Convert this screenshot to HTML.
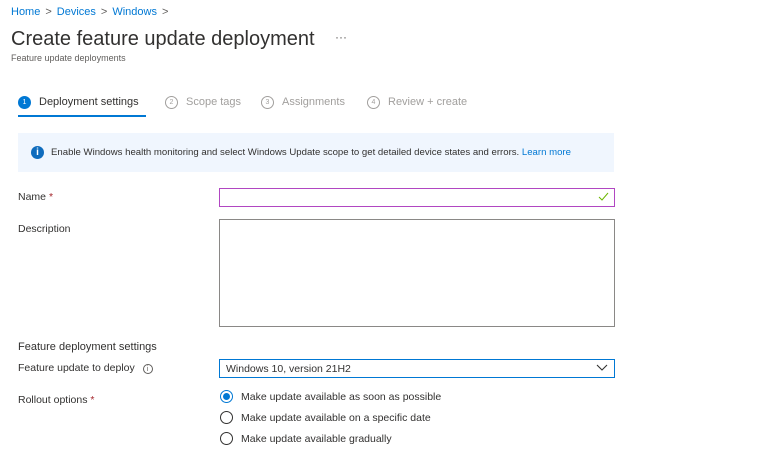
<!DOCTYPE html>
<html><head><style>
*{margin:0;padding:0;box-sizing:border-box}
body{width:768px;height:468px;background:#fff;font-family:"Liberation Sans",sans-serif;color:#323130;position:relative;overflow:hidden}
.a{position:absolute;white-space:nowrap}
.bc{font-size:11px;color:#0078d4;top:6px;left:11px}
.bc span{color:#605e5c;margin:0 5px}
.lbl{font-size:10.5px;color:#323130}
.rad{width:13px;height:13px;border:1px solid #323130;border-radius:50%;position:absolute}
.step{font-size:11px;color:#a19f9d;line-height:13px}
.num{display:inline-block;width:13px;height:13px;border:1px solid #a19f9d;border-radius:50%;font-size:7px;text-align:center;line-height:11px;vertical-align:top;margin-right:8px}
</style></head><body>
<div class="a bc">Home<span>&gt;</span>Devices<span>&gt;</span>Windows<span>&gt;</span></div>
<div class="a" style="top:28px;left:11px;font-size:20px;color:#323130">Create feature update deployment</div>
<div class="a" style="top:30px;left:335px;font-size:12px;color:#605e5c">···</div>
<div class="a" style="top:53px;left:11px;font-size:9px;color:#605e5c">Feature update deployments</div>

<div class="a step" style="top:96px;left:18px;color:#323130"><span class="num" style="background:#0078d4;border-color:#0078d4;color:#fff">1</span>Deployment settings</div>
<div class="a" style="top:115px;left:18px;width:128px;height:2px;background:#0078d4"></div>
<div class="a step" style="top:96px;left:165px"><span class="num">2</span>Scope tags</div>
<div class="a step" style="top:96px;left:261px"><span class="num">3</span>Assignments</div>
<div class="a step" style="top:96px;left:367px"><span class="num">4</span>Review + create</div>

<div class="a" style="top:133px;left:18px;width:596px;height:39px;background:#f0f6fe"></div>
<div class="a" style="top:146px;left:31px;width:13px;height:13px;border-radius:50%;background:#0f6cbd;color:#fff;font-size:10px;font-weight:bold;text-align:center;line-height:13px">i</div>
<div class="a" style="top:147px;left:51px;font-size:9.6px;color:#323130">Enable Windows health monitoring and select Windows Update scope to get detailed device states and errors. <span style="color:#0078d4">Learn more</span></div>

<div class="a lbl" style="top:191px;left:18px">Name <span style="color:#a4262c">*</span></div>
<div class="a" style="top:188px;left:219px;width:396px;height:19px;border:1px solid #b146c2"></div>
<svg class="a" style="top:192px;left:598px" width="11" height="10"><path d="M1 5 L4 8 L10 1" stroke="#6bb700" fill="none" stroke-width="1"/></svg>
<div class="a lbl" style="top:223px;left:18px">Description</div>
<div class="a" style="top:219px;left:219px;width:396px;height:108px;border:1px solid #8a8886"></div>

<div class="a lbl" style="top:341px;left:18px;font-size:11px">Feature deployment settings</div>
<div class="a lbl" style="top:362px;left:18px">Feature update to deploy <span style="display:inline-block;width:10px;height:10px;border:1px solid #605e5c;border-radius:50%;font-size:7px;text-align:center;line-height:9px;margin-left:5px;color:#605e5c">i</span></div>
<div class="a" style="top:359px;left:219px;width:396px;height:19px;border:1px solid #0078d4;font-size:10.5px;padding:3px 0 0 6px">Windows 10, version 21H2</div>
<svg class="a" style="top:364px;left:596px" width="12" height="8"><path d="M1 1 L6 6 L11 1" stroke="#323130" fill="none" stroke-width="1.1"/></svg>

<div class="a lbl" style="top:394px;left:18px">Rollout options <span style="color:#a4262c">*</span></div>
<div class="rad" style="top:390px;left:220px;border-color:#0078d4"><div style="width:7px;height:7px;border-radius:50%;background:#0078d4;margin:2px"></div></div>
<div class="a lbl" style="top:391px;left:241px">Make update available as soon as possible</div>
<div class="rad" style="top:411px;left:220px"></div>
<div class="a lbl" style="top:412px;left:241px">Make update available on a specific date</div>
<div class="rad" style="top:432px;left:220px"></div>
<div class="a lbl" style="top:433px;left:241px">Make update available gradually</div>
</body></html>
